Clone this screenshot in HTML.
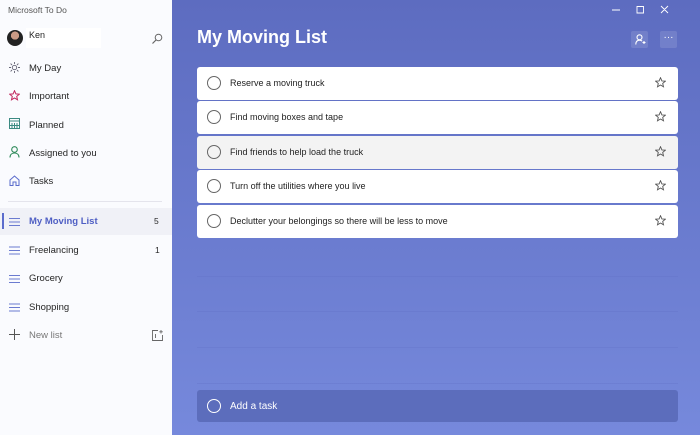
<!DOCTYPE html>
<html><head><style>
*{margin:0;padding:0;box-sizing:border-box}
body{width:700px;height:435px;overflow:hidden;font-family:"Segoe UI","Liberation Sans",sans-serif;position:relative;background:#fff}
#side{position:absolute;left:0;top:0;width:172px;height:435px;background:#fafbfe}
#main{position:absolute;left:172px;top:0;width:528px;height:435px;background:linear-gradient(#5d6cc0,#7689dc)}
.t{position:absolute;font-size:9.5px;color:#262626;white-space:nowrap}
.ic{position:absolute}
.task{position:absolute;left:25px;width:481px;height:33px;background:#fff;border-radius:3px}
.task .c{position:absolute;left:10px;top:9px;width:14px;height:14px;border:1.5px solid #666;border-radius:50%}
.task .tx{position:absolute;left:33px;top:11px;font-size:9px;color:#222}
.task svg{position:absolute;right:12px;top:10px}
.ln{position:absolute;left:25px;width:481px;height:1px;background:rgba(90,105,190,0.22)}
</style></head><body>
<div id="side">
<div class="t" style="left:8px;top:5px;font-size:8.5px;color:#555">Microsoft To Do</div>
<div style="position:absolute;left:7px;top:30px;width:16px;height:16px;border-radius:50%;background:radial-gradient(circle at 50% 35%,#c99a85 0 30%,#222 32%);"></div>
<div style="position:absolute;left:26px;top:28px;width:75px;height:20px;background:#fff"></div>
<div class="t" style="left:29px;top:30px;font-size:9px">Ken</div>
<svg class="ic" style="left:151px;top:33px" width="12" height="12" viewBox="0 0 12 12"><circle cx="7.5" cy="4.5" r="3.3" fill="none" stroke="#666" stroke-width="1"/><path d="M5 7L1.5 10.5" stroke="#666" stroke-width="1.2"/></svg>
<svg class="ic" style="left:9px;top:62px" width="11" height="11" viewBox="0 0 11 11" stroke="#667" stroke-width=".9" fill="none"><circle cx="5.5" cy="5.5" r="2.2"/><path d="M5.5 0v2M5.5 9v2M0 5.5h2M9 5.5h2M1.6 1.6l1.4 1.4M8 8l1.4 1.4M1.6 9.4L3 8M8 3l1.4-1.4"/></svg>
<div class="t" style="left:29px;top:63px">My Day</div>
<svg class="ic" style="left:9px;top:90px" width="11" height="11" viewBox="0 0 11 11"><path d="M5.5 .7l1.4 3.2 3.4.3-2.6 2.2.8 3.4-3-1.8-3 1.8.8-3.4L.7 4.2l3.4-.3z" fill="none" stroke="#c2255c" stroke-width="1"/></svg>
<div class="t" style="left:29px;top:91px">Important</div>
<svg class="ic" style="left:9px;top:118px" width="11" height="11" viewBox="0 0 11 11" fill="none" stroke="#3b8a82" stroke-width="1"><rect x=".5" y=".5" width="10" height="10"/><path d="M.5 3h10M3 5v5M5.5 5v5M8 5v5M.5 7.5h10"/></svg>
<div class="t" style="left:29px;top:120px">Planned</div>
<svg class="ic" style="left:9px;top:146px" width="11" height="12" viewBox="0 0 11 12" fill="none" stroke="#2e8a5a" stroke-width="1.1"><circle cx="5.5" cy="3.5" r="2.8"/><path d="M1 11.5c0-3 2-4.5 4.5-4.5s4.5 1.5 4.5 4.5"/></svg>
<div class="t" style="left:29px;top:148px">Assigned to you</div>
<svg class="ic" style="left:9px;top:175px" width="11" height="11" viewBox="0 0 11 11" fill="none" stroke="#5b6ccc" stroke-width="1"><path d="M1 5L5.5 1 10 5v5.5H7V7H4v3.5H1z"/></svg>
<div class="t" style="left:29px;top:176px">Tasks</div>
<div style="position:absolute;left:8px;top:201px;width:154px;height:1px;background:#e4e4ec"></div>
<div style="position:absolute;left:0;top:208px;width:172px;height:27px;background:#f0f1f7"></div>
<div style="position:absolute;left:2px;top:213px;width:2px;height:16px;background:#5b6ccc"></div>
<div class="t" style="left:29px;top:216px;color:#4f5fc4;font-weight:bold">My Moving List</div>
<div class="t" style="left:154px;top:216px;font-size:8.5px">5</div>
<div class="t" style="left:29px;top:245px">Freelancing</div>
<div class="t" style="left:155px;top:245px;font-size:8.5px">1</div>
<div class="t" style="left:29px;top:273px">Grocery</div>
<div class="t" style="left:29px;top:302px">Shopping</div>
<svg class="ic" style="left:9px;top:217px" width="11" height="96" viewBox="0 0 11 96" stroke="#6b7bd0" stroke-width="1"><path d="M0 1.5h11M0 5h11M0 8.5h11M0 30h11M0 33.5h11M0 37h11M0 58.5h11M0 62h11M0 65.5h11M0 87h11M0 90.5h11M0 94h11"/></svg>
<svg class="ic" style="left:9px;top:329px" width="11" height="11" viewBox="0 0 11 11" stroke="#555" stroke-width="1"><path d="M5.5 0v11M0 5.5h11"/></svg>
<div class="t" style="left:29px;top:330px;color:#777">New list</div>
<svg class="ic" style="left:152px;top:330px" width="11" height="11" viewBox="0 0 11 11" fill="none" stroke="#666" stroke-width=".9"><path d="M6 .5H.5v10h10V5M9 0v3.5M7.3 1.8h3.5"/><path d="M3.5 4v4"/></svg>
</div>
<div id="main">
<svg class="ic" style="left:440px;top:5px" width="80" height="10" viewBox="0 0 80 10" fill="none" stroke="#fff" stroke-width=".9"><path d="M0 5h8M25 1.5h6.5v6.5H25zM49 1l7 7M56 1l-7 7"/></svg>
<div class="t" style="left:25px;top:27px;font-size:18px;font-weight:bold;color:#fff">My Moving List</div>
<div style="position:absolute;left:459px;top:31px;width:17px;height:17px;background:rgba(255,255,255,.12);border-radius:2px"></div>
<svg class="ic" style="left:463px;top:34px" width="11" height="11" viewBox="0 0 11 11" fill="none" stroke="#fff" stroke-width="1.1"><circle cx="4.5" cy="3.3" r="2.5"/><path d="M.8 10.5c0-3 1.5-4.3 3.7-4.3 1.3 0 2 .3 2.6 1M7.5 8.5h3M9 7v3"/></svg>
<div style="position:absolute;left:488px;top:31px;width:17px;height:17px;background:rgba(255,255,255,.12);border-radius:2px;color:#fff;font-size:10px;text-align:center;line-height:13px">···</div>
<div class="task" style="top:67px"><div class="c"></div><div class="tx">Reserve a moving truck</div><svg width="11" height="11" viewBox="0 0 11 11"><path d="M5.5 .7l1.4 3.2 3.4.3-2.6 2.2.8 3.4-3-1.8-3 1.8.8-3.4L.7 4.2l3.4-.3z" fill="none" stroke="#555" stroke-width=".9"/></svg></div>
<div class="task" style="top:101px"><div class="c"></div><div class="tx">Find moving boxes and tape</div><svg width="11" height="11" viewBox="0 0 11 11"><path d="M5.5 .7l1.4 3.2 3.4.3-2.6 2.2.8 3.4-3-1.8-3 1.8.8-3.4L.7 4.2l3.4-.3z" fill="none" stroke="#555" stroke-width=".9"/></svg></div>
<div class="task" style="top:136px;background:#f3f3f3"><div class="c"></div><div class="tx">Find friends to help load the truck</div><svg width="11" height="11" viewBox="0 0 11 11"><path d="M5.5 .7l1.4 3.2 3.4.3-2.6 2.2.8 3.4-3-1.8-3 1.8.8-3.4L.7 4.2l3.4-.3z" fill="none" stroke="#555" stroke-width=".9"/></svg></div>
<div class="task" style="top:170px"><div class="c"></div><div class="tx">Turn off the utilities where you live</div><svg width="11" height="11" viewBox="0 0 11 11"><path d="M5.5 .7l1.4 3.2 3.4.3-2.6 2.2.8 3.4-3-1.8-3 1.8.8-3.4L.7 4.2l3.4-.3z" fill="none" stroke="#555" stroke-width=".9"/></svg></div>
<div class="task" style="top:205px"><div class="c"></div><div class="tx">Declutter your belongings so there will be less to move</div><svg width="11" height="11" viewBox="0 0 11 11"><path d="M5.5 .7l1.4 3.2 3.4.3-2.6 2.2.8 3.4-3-1.8-3 1.8.8-3.4L.7 4.2l3.4-.3z" fill="none" stroke="#555" stroke-width=".9"/></svg></div>
<div class="ln" style="top:276px"></div><div class="ln" style="top:311px"></div><div class="ln" style="top:347px"></div><div class="ln" style="top:383px"></div>
<div style="position:absolute;left:25px;top:390px;width:481px;height:32px;background:#5c6dbc;border-radius:3px">
<div style="position:absolute;left:10px;top:9px;width:14px;height:14px;border:1.5px solid #fff;border-radius:50%"></div>
<div class="t" style="left:33px;top:11px;color:#fff;font-size:10px">Add a task</div></div>
</div>
</body></html>
